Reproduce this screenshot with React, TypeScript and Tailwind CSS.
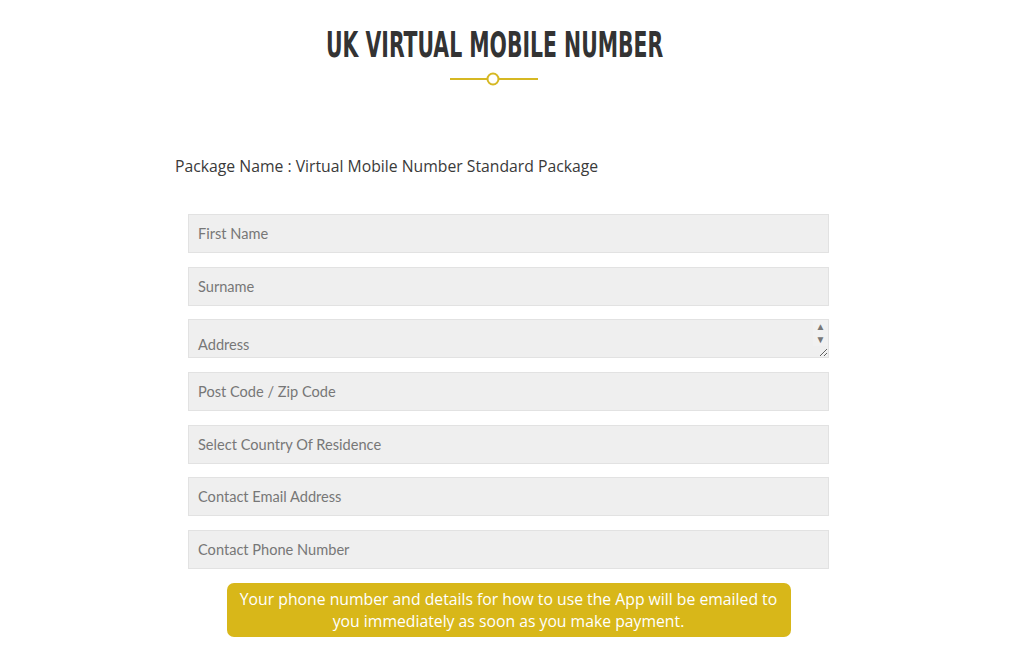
import React from "react";

const fields = [
  "First Name",
  "Surname",
  "Address",
  "Post Code / Zip Code",
  "Select Country Of Residence",
  "Contact Email Address",
  "Contact Phone Number",
];

function Ornament() {
  return (
    <svg width="90" height="14" viewBox="0 0 90 14" className="block">
      <line x1="0" y1="7" x2="37" y2="7" stroke="#d6b823" strokeWidth="2" />
      <circle cx="43" cy="7" r="5.5" fill="white" stroke="#d6b823" strokeWidth="2" />
      <line x1="49" y1="7" x2="88" y2="7" stroke="#d6b823" strokeWidth="2" />
    </svg>
  );
}

export default function App() {
  return (
    <div className="min-h-screen bg-white" style={{ fontFamily: "'Open Sans', Lato, sans-serif" }}>
      <div className="ml-[175px] w-[640px] pt-[27px]">
        <div className="flex flex-col items-center">
          <h1
            className="text-[36px] leading-[36px] text-[#333] font-bold whitespace-nowrap scale-x-[0.63]"
            style={{ fontFamily: "'DejaVu Sans Condensed', 'Liberation Sans', sans-serif" }}
          >
            UK VIRTUAL MOBILE NUMBER
          </h1>
          <div className="mt-[9px]">
            <Ornament />
          </div>
        </div>

        <p className="mt-[70px] text-[15.75px] text-[#3a3a3a] leading-[20px]">
          Package Name : Virtual Mobile Number Standard Package
        </p>

        <form
          className="ml-[13px] w-[641px] mt-[38px] flex flex-col gap-[13.67px]"
          style={{ fontFamily: "Lato, 'Open Sans', sans-serif" }}
        >
          {fields.map((f) =>
            f === "Address" ? (
              <div key={f} className="relative h-[39px]">
                <textarea
                  placeholder={f}
                  className="block h-[39px] w-full resize-y bg-[#efefef] border border-[#e2e2e2] pl-[9px] pr-[20px] pt-[16px] text-[14.6px] leading-[18px] text-[#555] placeholder:text-[#777] outline-none"
                />
                <div className="absolute right-[1px] top-[1px] w-[15px] flex flex-col items-center pointer-events-none bg-[#f1f1f1]">
                  <span className="text-[10px] leading-[13px] text-[#777]">▲</span>
                  <span className="text-[10px] leading-[13px] text-[#777]">▼</span>
                </div>
              </div>
            ) : (
              <input
                key={f}
                placeholder={f}
                className="h-[39px] w-full bg-[#efefef] border border-[#e2e2e2] px-[9px] text-[14.6px] text-[#555] placeholder:text-[#777] outline-none"
              />
            )
          )}
          <div className="flex justify-center">
            <div
              className="w-[564px] rounded-[7px] bg-[#d8b719] py-[5px] text-center text-[15.75px] leading-[22px] text-white"
              style={{ fontFamily: "'Open Sans', Lato, sans-serif" }}
            >
              Your phone number and details for how to use the App will be emailed to
              <br />
              you immediately as soon as you make payment.
            </div>
          </div>
        </form>
      </div>
    </div>
  );
}
